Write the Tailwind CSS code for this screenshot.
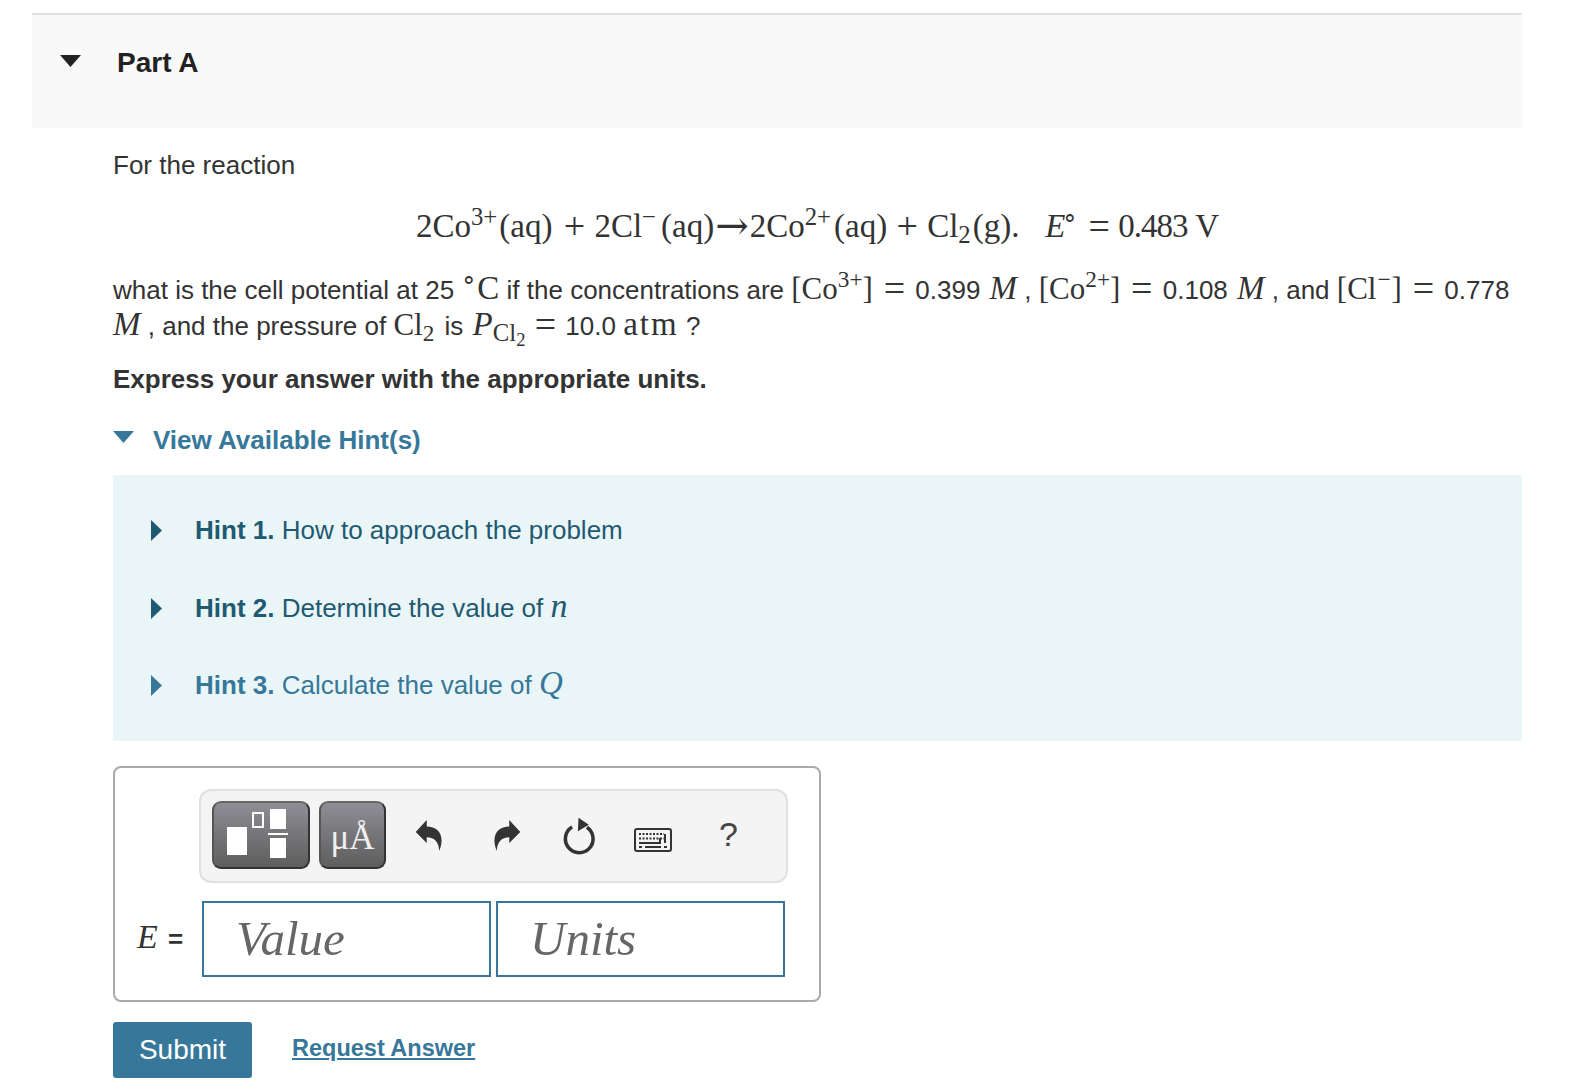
<!DOCTYPE html>
<html lang="en">

<head>
    <meta charset="UTF-8">
    <meta name="viewport" content="width=device-width, initial-scale=1.0">
    <title>Part A</title>
    <script src="https://cdn.jsdelivr.net/npm/@tailwindcss/browser@4"></script>
</head>

<body class="bg-white min-h-screen font-['Liberation_Sans',sans-serif] text-[#333] text-[26px] overflow-hidden">
    <div class="pt-[13px] pl-[32px] pr-[52px]">
        <!-- Part header -->
        <div class="h-[115px] border-t-2 border-[#e0e0e0] bg-[#f9f9f9] pt-[30px] pl-[28px] flex items-start">
            <svg class="w-[21px] h-[12px] mt-[10px]" viewBox="0 0 21 12"><path d="M0 0H21L10.5 12Z" fill="#222" /></svg>
            <h2 class="ml-[36px] text-[28px] leading-[36px] font-bold text-[#222]">Part A</h2>
        </div>

        <div class="pl-[81px]">
            <p class="mt-[19px] leading-[36px]">For the reaction</p>

            <p class="mt-[25px] text-center leading-[36px] text-[33px] font-['Liberation_Serif',serif] whitespace-nowrap">
                2Co<sup>3+</sup><span class="ml-[2px]">(aq)</span> <span class="text-[38px] leading-[0] align-[-2px] ml-[3px] mr-[1px]">+</span> 2Cl<sup>−</sup><span class="ml-[5px]">(aq)</span><span class="font-['DejaVu_Serif',serif] text-[40px] leading-[0] align-[-2px] mx-[1px]">→</span>2Co<sup>2+</sup><span class="ml-[3px]">(aq)</span> <span class="text-[38px] leading-[0] align-[-2px] mx-[1px]">+</span> Cl<sub>2</sub><span class="ml-[2px]">(g)</span>.&nbsp;&nbsp; <i class="ml-[1px]">E</i><sup class="-ml-[3px]">∘</sup> <span class="text-[38px] leading-[0] align-[-2px] ml-[2px]">=</span> <span class="tracking-[-1px]">0.483</span> V
            </p>

            <p class="mt-[28px] leading-[36px] whitespace-nowrap">
                what is the cell potential at 25 <span class="font-['Liberation_Serif',serif] text-[33px] leading-[0]"><sup>∘</sup>C</span> if the concentrations are
                <span class="font-['Liberation_Serif',serif] text-[31px] leading-[0]">[Co<sup>3+</sup>] <span class="text-[38px] leading-[0] align-[-2px] mx-[3px]">=</span></span> 0.399 <i class="font-['Liberation_Serif',serif] text-[33px] leading-[0] ml-[2px]">M</i> ,
                <span class="font-['Liberation_Serif',serif] text-[31px] leading-[0]">[Co<sup>2+</sup>] <span class="text-[38px] leading-[0] align-[-2px] mx-[3px]">=</span></span> 0.108 <i class="font-['Liberation_Serif',serif] text-[33px] leading-[0] ml-[2px]">M</i> , and
                <span class="font-['Liberation_Serif',serif] text-[31px] leading-[0]">[Cl<sup class="ml-[1px]">−</sup><span class="ml-[1px]">]</span> <span class="text-[38px] leading-[0] align-[-2px] mx-[3px]">=</span></span> 0.778<br>
                <i class="font-['Liberation_Serif',serif] text-[33px] leading-[0]">M</i> , and the pressure of
                <span class="font-['Liberation_Serif',serif] text-[31px] leading-[0] mr-[3px]">Cl<sub>2</sub></span> is
                <span class="font-['Liberation_Serif',serif] text-[33px] leading-[0] ml-[2px]"><i>P</i><sub>Cl<sub>2</sub></sub> <span class="text-[38px] leading-[0] align-[-2px] ml-[1px] mr-[2px]">=</span></span> 10.0
                <span class="font-['Liberation_Serif',serif] text-[33px] leading-[0] tracking-[2px]">atm</span> ?
            </p>

            <p class="mt-[17px] leading-[36px] font-bold">Express your answer with the appropriate units.</p>

            <div class="mt-[25px] flex items-start">
                <svg class="w-[21px] h-[12px] mt-[9px]" viewBox="0 0 21 12"><path d="M0 0H21L10.5 12Z" fill="#37789a" /></svg>
                <span class="ml-[19px] leading-[36px] font-bold text-[#37789a]">View Available Hint(s)</span>
            </div>

            <!-- Hints -->
            <div class="mt-[17px] h-[266px] bg-[#eaf5f7] pt-[37px] pl-[38px]">
                <div class="flex items-center h-[36px] text-[#1f5a72]">
                    <svg class="w-[11px] h-[21px]" viewBox="0 0 11 21"><path d="M0 0L11 10.5L0 21Z" fill="#1f5a72" /></svg>
                    <p class="ml-[33px]"><b>Hint 1.</b> How to approach the problem</p>
                </div>
                <div class="flex items-center h-[36px] mt-[42px] text-[#1f5a72]">
                    <svg class="w-[11px] h-[21px]" viewBox="0 0 11 21"><path d="M0 0L11 10.5L0 21Z" fill="#1f5a72" /></svg>
                    <p class="ml-[33px]"><b>Hint 2.</b> Determine the value of <i class="font-['Liberation_Serif',serif] text-[34px] leading-[0]">n</i></p>
                </div>
                <div class="flex items-center h-[36px] mt-[41px] text-[#37789a]">
                    <svg class="w-[11px] h-[21px]" viewBox="0 0 11 21"><path d="M0 0L11 10.5L0 21Z" fill="#37789a" /></svg>
                    <p class="ml-[33px]"><b>Hint 3.</b> Calculate the value of <i class="font-['Liberation_Serif',serif] text-[33px] leading-[0]">Q</i></p>
                </div>
            </div>

            <!-- Answer box -->
            <div class="mt-[25px] w-[708px] h-[236px] border-2 border-[#aaa] rounded-[8px] pt-[21px] pl-[84px]">
                <div class="w-[589px] h-[94px] bg-[#f4f4f4] border-2 border-[#e0e0e0] rounded-[12px] pt-[10px] pl-[11px] flex items-start">
                    <div class="relative w-[98px] h-[68px] rounded-[9px] border-2 border-[#333] border-t-[#666] border-l-[#555] bg-linear-to-b from-[#8e8e95] to-[#5e5e5e]">
                        <svg class="w-[94px] h-[64px]" viewBox="0 0 94 64">
                            <rect x="13" y="24" width="20" height="28" fill="#fff" />
                            <rect x="39" y="10" width="10" height="14" fill="none" stroke="#fff" stroke-width="2" />
                            <rect x="56" y="6" width="16" height="20" fill="#fff" />
                            <rect x="54" y="30" width="20" height="2" fill="#fff" />
                            <rect x="56" y="35" width="16" height="20" fill="#fff" />
                        </svg>
                    </div>
                    <div class="ml-[9px] w-[67px] h-[68px] rounded-[9px] border-2 border-[#333] border-t-[#666] border-l-[#555] bg-linear-to-b from-[#8e8e95] to-[#5e5e5e] flex items-end justify-center pb-[11px] font-['Liberation_Serif',serif] text-[35px] leading-[36px] text-[#f0f0f0]">μÅ</div>
                    <svg class="ml-[28px] mt-[17px] w-[31px] h-[35px]" viewBox="660 100 90 100">
                        <path d="M665 140L697 105V124C730 124 752 150 733 195C733 170 720 155 697 155V172Z" fill="#333" />
                    </svg>
                    <svg class="ml-[46px] mt-[17px] w-[31px] h-[35px] -scale-x-100" viewBox="660 100 90 100">
                        <path d="M665 140L697 105V124C730 124 752 150 733 195C733 170 720 155 697 155V172Z" fill="#333" />
                    </svg>
                    <svg class="ml-[40px] mt-[16px] w-[34px] h-[38px]" viewBox="245 90 105 118">
                        <path d="M276 121A43 43 0 1 0 322 122" fill="none" stroke="#333" stroke-width="11" />
                        <path d="M296 92L328 114L294 134Z" fill="#333" />
                    </svg>
                    <svg class="ml-[38px] mt-[27px] w-[38px] h-[24px]" viewBox="0 0 38 24">
                        <rect x="1" y="1" width="36" height="22" rx="2" fill="none" stroke="#333" stroke-width="2" />
                        <path d="M5 6H30M5 10.500H30" stroke="#333" stroke-width="2" stroke-dasharray="2 1.500" />
                        <path d="M5 15H26V10M31 6V15" fill="none" stroke="#333" stroke-width="2" />
                        <path d="M5 19H8M11 19H27M30 19H33" stroke="#333" stroke-width="2" />
                    </svg>
                    <span class="ml-[47px] mt-[13px] text-[34px] leading-[40px] text-[#444]">?</span>
                </div>
                <div class="relative flex mt-[18px] ml-[3px] gap-[5px]">
                    <div class="absolute -left-[65px] top-[20px] text-[26px] leading-[36px] whitespace-nowrap"><i class="font-['Liberation_Serif',serif] text-[34px] leading-[0]">E</i> <span class="font-bold ml-[3px]">=</span></div>
                    <div class="w-[289px] h-[76px] border-2 border-[#37789a] pl-[32px] flex items-center font-['Liberation_Serif',serif] italic text-[49px] text-[#666]">Value</div>
                    <div class="w-[289px] h-[76px] border-2 border-[#37789a] pl-[32px] flex items-center font-['Liberation_Serif',serif] italic text-[49px] text-[#666]">Units</div>
                </div>
            </div>

            <div class="mt-[20px] flex items-start">
                <button class="w-[139px] h-[56px] bg-[#37789a] rounded-[3px] text-white text-[28px]">Submit</button>
                <a class="ml-[40px] mt-[8px] leading-[36px] text-[23.5px] font-bold text-[#37789a] underline">Request Answer</a>
            </div>
        </div>
    </div>
</body>

</html>
